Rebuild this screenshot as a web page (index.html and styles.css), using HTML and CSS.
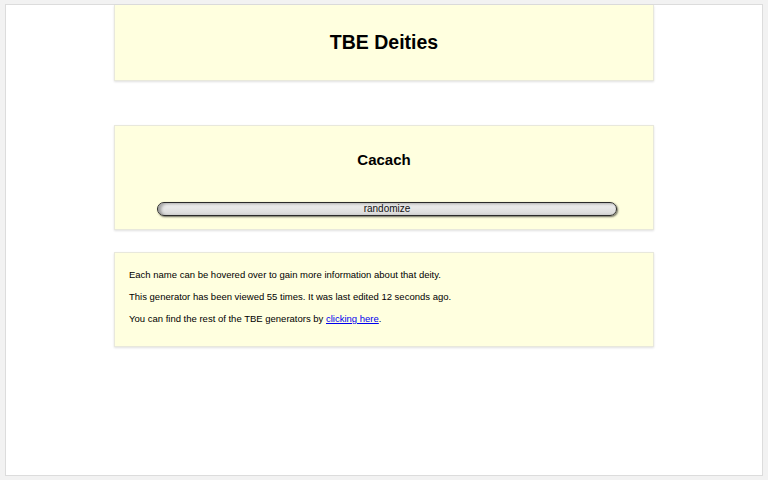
FILE: index.html
```html
<!DOCTYPE html>
<html>
<head>
<meta charset="utf-8">
<link rel="stylesheet" href="styles.css">
</head>
<body>
<div class="page">
  <div class="card head">
    <h1 class="title">TBE Deities</h1>
  </div>
  <div class="card gen">
    <h2 class="name">Cacach</h2>
    <button class="rand">randomize</button>
  </div>
  <div class="card info">
    <p>Each name can be hovered over to gain more information about that deity.</p>
    <p>This generator has been viewed 55 times. It was last edited 12 seconds ago.</p>
    <p>You can find the rest of the TBE generators by <a href="#">clicking here</a>.</p>
  </div>
</div>
</body>
</html>
```

FILE: styles.css
```css
html, body {
  margin: 0;
  padding: 0;
  background: #f2f2f2;
  font-family: "Liberation Sans", Arial, sans-serif;
  color: #000;
}
body {
  padding: 4px 4px 4px 5px;
  height: 480px;
  box-sizing: border-box;
}
.page {
  background: #fff;
  border: 1px solid #dcdcdc;
  height: 472px;
  box-sizing: border-box;
  width: 758px;
  display: flex;
  flex-direction: column;
  align-items: center;
}
.card {
  width: 540px;
  box-sizing: border-box;
  background: #ffffdf;
  border: 1px solid #e8e8dc;
  box-shadow: 0 1px 2px rgba(0,0,0,0.12);
}
.head {
  height: 76px;
  display: flex;
  align-items: center;
  justify-content: center;
  border-top: none;
}
.title {
  margin: 0;
  font-size: 19.5px;
  font-weight: bold;
}
.gen {
  margin-top: 44px;
  height: 105px;
  display: flex;
  flex-direction: column;
  align-items: center;
}
.name {
  margin: 25px 0 0;
  font-size: 15px;
  font-weight: bold;
  line-height: 17px;
}
.rand {
  margin-top: 34px;
  margin-left: 6px;
  width: 460px;
  height: 14px;
  padding: 0;
  border: 1px solid #2a2a2a;
  border-radius: 7px;
  background: linear-gradient(#f2f2f2, #d8d8d8);
  box-shadow: 1px 1px 2px rgba(0,0,0,0.6), inset 3px 1px 3px rgba(0,0,0,0.3);
  font-family: "Liberation Sans", Arial, sans-serif;
  font-size: 10px;
  line-height: 12px;
  color: #111;
}
.info {
  margin-top: 22px;
  height: 95px;
  padding: 16px 14px 0;
}
.info p {
  margin: 0 0 10px;
  font-size: 9.5px;
  line-height: 12px;
}
.info a {
  color: #0000ee;
  text-decoration: underline;
}
```
